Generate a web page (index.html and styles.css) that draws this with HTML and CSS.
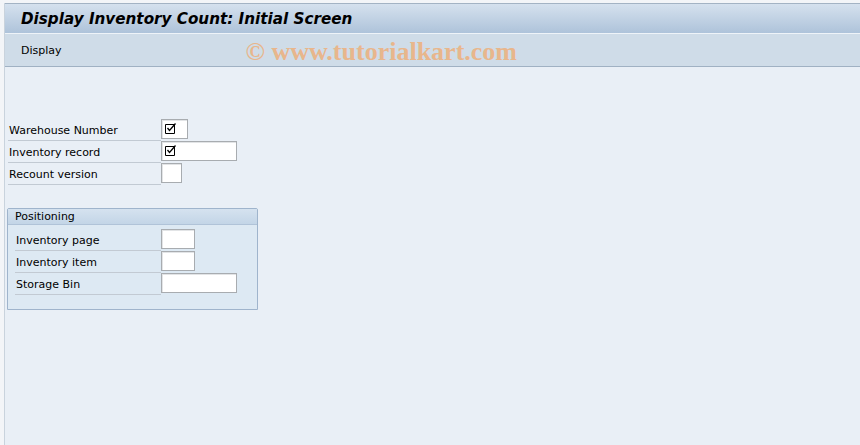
FILE: index.html
```html
<!DOCTYPE html>
<html lang="en">
<head>
    <meta charset="UTF-8">
    <title>Display Inventory Count: Initial Screen</title>
    <link rel="stylesheet" href="styles.css">
</head>
<body>
    <div class="screen">
        <div class="title-bar">
            <h1>Display Inventory Count: Initial Screen</h1>
        </div>

        <div class="toolbar">
            <span class="toolbar-item">Display</span>
            <span class="watermark">© www.tutorialkart.com</span>
        </div>

        <div class="content">
            <div class="fields">
                <div class="field-row">
                    <label>Warehouse Number</label>
                    <div class="input w-27">
                        <svg class="req" width="12" height="12" viewBox="0 0 12 12"><path d="M0.5 2.5h9v9h-9z" fill="none" stroke="#000"/><path d="M2.5 6l2 2.5 6-7" fill="none" stroke="#000" stroke-width="1.3"/></svg>
                    </div>
                </div>
                <div class="field-row">
                    <label>Inventory record</label>
                    <div class="input w-76">
                        <svg class="req" width="12" height="12" viewBox="0 0 12 12"><path d="M0.5 2.5h9v9h-9z" fill="none" stroke="#000"/><path d="M2.5 6l2 2.5 6-7" fill="none" stroke="#000" stroke-width="1.3"/></svg>
                    </div>
                </div>
                <div class="field-row">
                    <label>Recount version</label>
                    <div class="input w-21"></div>
                </div>
            </div>

            <div class="group">
                <div class="group-title">Positioning</div>
                <div class="group-body">
                    <div class="field-row">
                        <label>Inventory page</label>
                        <div class="input w-34"></div>
                    </div>
                    <div class="field-row">
                        <label>Inventory item</label>
                        <div class="input w-34"></div>
                    </div>
                    <div class="field-row">
                        <label>Storage Bin</label>
                        <div class="input w-76"></div>
                    </div>
                </div>
            </div>
        </div>
    </div>
</body>
</html>
```

FILE: styles.css
```css
* {
    margin: 0;
    padding: 0;
    box-sizing: border-box;
}

body {
    background-color: #f3f5f8;
    font-family: 'DejaVu Sans', sans-serif;
    font-size: 11px;
    color: #000;
    height: 445px;
    overflow: hidden;
}

.screen {
    margin: 3px 0 0 4px;
    height: 442px;
    background-color: #e9eff6;
    border-left: 1px solid #c9d3dd;
}

.title-bar {
    height: 31px;
    border-top: 1px solid #a3b3c4;
    border-bottom: 1px solid #eef3f8;
    background: linear-gradient(#d5e1ee, #aec3da);
    padding-left: 16px;
    display: flex;
    align-items: center;
}

.title-bar h1 {
    font-size: 15.2px;
    font-weight: bold;
    font-style: italic;
    color: #000;
}

.toolbar {
    height: 33px;
    background-color: #cfdce8;
    border-bottom: 1px solid #a0b1c3;
    display: flex;
    align-items: center;
    padding-left: 16px;
}

.toolbar-item {
    font-size: 11px;
}

.watermark {
    margin-left: 184px;
    font-family: 'Liberation Serif', serif;
    font-weight: bold;
    font-size: 26px;
    color: #e8b68c;
    padding-top: 3px;
}

.content {
    padding: 52px 0 0 3px;
}

.field-row {
    display: flex;
    align-items: flex-start;
    height: 22px;
}

.field-row label {
    width: 153px;
    height: 22px;
    padding: 5px 0 0 1px;
    border-bottom: 1px solid #c2cad3;
    flex-shrink: 0;
}

.input {
    height: 20px;
    background-color: #fff;
    border: 1px solid #a8acb0;
    box-shadow: inset 1px 1px 0 #e2e4e6;
    padding: 2px 0 0 3px;
}

.req {
    display: block;
}

.w-21 { width: 21px; }
.w-27 { width: 27px; }
.w-34 { width: 34px; }
.w-76 { width: 76px; }

.group {
    margin: 23px 0 0 -1px;
    width: 251px;
    height: 102px;
    border: 1px solid #9fb4cc;
    border-radius: 2px 2px 0 0;
    background-color: #dde9f3;
}

.group-title {
    height: 16px;
    padding: 1px 0 0 7px;
    background: linear-gradient(#d5e2ef, #c3d5e7);
    border-bottom: 1px solid #b0c3d8;
}

.group-body {
    padding: 4px 0 0 7px;
}

.group-body .field-row label {
    width: 146px;
    padding-left: 1px;
}
```
